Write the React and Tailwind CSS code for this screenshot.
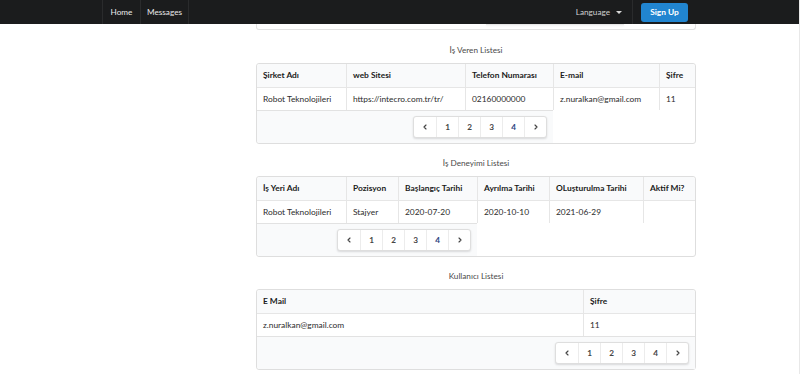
import React from 'react';
import { ChevronLeft, ChevronRight } from 'lucide-react';

// --- Data ---
const employers = {
  title: 'İş Veren Listesi',
  cols: [
    { h: 'Şirket Adı', w: 89 },
    { h: 'web Sitesi', w: 119 },
    { h: 'Telefon Numarası', w: 88 },
    { h: 'E-mail', w: 106 },
    { h: 'Şifre', w: 36 },
  ],
  row: ['Robot Teknolojileri', 'https://intecro.com.tr/tr/', '02160000000', 'z.nuralkan@gmail.com', '11'],
  span: 3,
  activeFour: true,
};

const experience = {
  title: 'İş Deneyimi Listesi',
  cols: [
    { h: 'İş Yeri Adı', w: 89 },
    { h: 'Pozisyon', w: 52 },
    { h: 'Başlangıç Tarihi', w: 79 },
    { h: 'Ayrılma Tarihi', w: 72 },
    { h: 'OLuşturulma Tarihi', w: 94 },
    { h: 'Aktif Mi?', w: 52 },
  ],
  row: ['Robot Teknolojileri', 'Stajyer', '2020-07-20', '2020-10-10', '2021-06-29', ''],
  span: 3,
  activeFour: true,
};

const users = {
  title: 'Kullanıcı Listesi',
  cols: [
    { h: 'E Mail', w: 326 },
    { h: 'Şifre', w: 112 },
  ],
  row: ['z.nuralkan@gmail.com', '11'],
  span: 2,
  activeFour: false,
};

const Pagination = ({ activeFour }) => {
  const cell = 'w-[22px] h-full flex items-center justify-center';
  return (
    <div className="flex h-[22px] bg-white border border-[#dedede] rounded-[3px] shadow-[0_1px_2px_0_rgba(34,36,38,0.15)] text-[8.2px] text-[#444]">
      <div className={cell}><ChevronLeft size={8} strokeWidth={3.5} /></div>
      <div className={`${cell} border-l border-[#ececec]`}>1</div>
      <div className={`${cell} border-l border-[#ececec]`}>2</div>
      <div className={`${cell} border-l border-[#ececec]`}>3</div>
      <div className={`${cell} border-l border-[#ececec] ${activeFour ? 'text-[#2a3f80]' : ''}`}>4</div>
      <div className={`${cell} border-l border-[#ececec]`}><ChevronRight size={8} strokeWidth={3.5} /></div>
    </div>
  );
};

const ListTable = ({ data, first }) => (
  <section>
    <div className={`${first ? 'mt-[14px] mb-[7px]' : 'mt-[13px] mb-[7px]'} h-[12px] leading-[12px] text-center text-[8.2px] text-[#4a4a4a]`}>
      {data.title}
    </div>
    <table className="w-[440px] table-fixed border-separate border-spacing-0 border border-[#dedede] rounded-[3px] text-[8.4px] text-[#2b2b2b]">
      <colgroup>
        {data.cols.map((c, i) => <col key={i} style={{ width: c.w }} />)}
      </colgroup>
      <thead>
        <tr>
          {data.cols.map((c, i) => (
            <th
              key={i}
              className={`h-[24px] px-[6px] py-0 text-left font-bold text-[#1a1a1a] bg-[#f9fafb] border-b border-[#e6e6e6] ${i ? 'border-l' : ''} ${i === 0 ? 'rounded-tl-[3px]' : ''} ${i === data.cols.length - 1 ? 'rounded-tr-[3px]' : ''}`}
            >
              {c.h}
            </th>
          ))}
        </tr>
      </thead>
      <tbody>
        <tr>
          {data.row.map((v, i) => (
            <td key={i} className={`h-[22px] px-[6px] py-0 whitespace-nowrap overflow-hidden ${i ? 'border-l border-[#e6e6e6]' : ''}`}>
              {v}
            </td>
          ))}
        </tr>
      </tbody>
      <tfoot>
        <tr>
          <th colSpan={data.span} className="h-[33px] px-[6px] py-0 bg-[#f9fafb] border-t border-[#e2e2e2] rounded-bl-[3px]">
            <div className="flex justify-end">
              <Pagination activeFour={data.activeFour} />
            </div>
          </th>
        </tr>
      </tfoot>
    </table>
  </section>
);

export default function App() {
  return (
    <div className="w-[800px] h-[374px] overflow-hidden bg-white border-r border-[#e8e8e8] font-['Lato','Liberation_Sans',sans-serif]">
      {/* --- Navbar --- */}
      <nav className="h-[24px] bg-[#1b1c1d] flex items-stretch text-[8.2px] text-[#e8e8e8]">
        <div className="w-[102px]" />
        <div className="flex border-l border-[#2a2b2c]">
          <a className="w-[37px] flex items-center justify-center">Home</a>
          <a className="w-[49px] flex items-center justify-center border-l border-[#2a2b2c] border-r">Messages</a>
        </div>
        <div className="flex-1" />
        <div className="flex items-center pr-[10px] text-[#d0d0d0]">
          Language
          <span className="ml-[6px] w-0 h-0 border-x-[3px] border-x-transparent border-t-[3px] border-t-[#d8d8d8]" />
        </div>
        <div className="border-l border-[#2a2b2c] pl-[8px] pr-[111px] flex items-center">
          <button className="w-[47px] h-[19px] rounded-[3px] bg-[#2185d0] text-white font-bold text-[8.4px]">Sign Up</button>
        </div>
      </nav>

      {/* --- Content --- */}
      <div className="grid grid-cols-[256px_440px]">
        <div />
        <div>
          <div className="h-[6px] border-x border-b border-[#e2e2e2] rounded-b-[3px] pl-[229px]">
            <div className="w-[138px] h-[1px] bg-[#e6e6e6] shadow-[0_1px_2px_rgba(0,0,0,0.08)]" />
          </div>
          <ListTable data={employers} first />
          <ListTable data={experience} />
          <ListTable data={users} />
        </div>
      </div>
    </div>
  );
}
